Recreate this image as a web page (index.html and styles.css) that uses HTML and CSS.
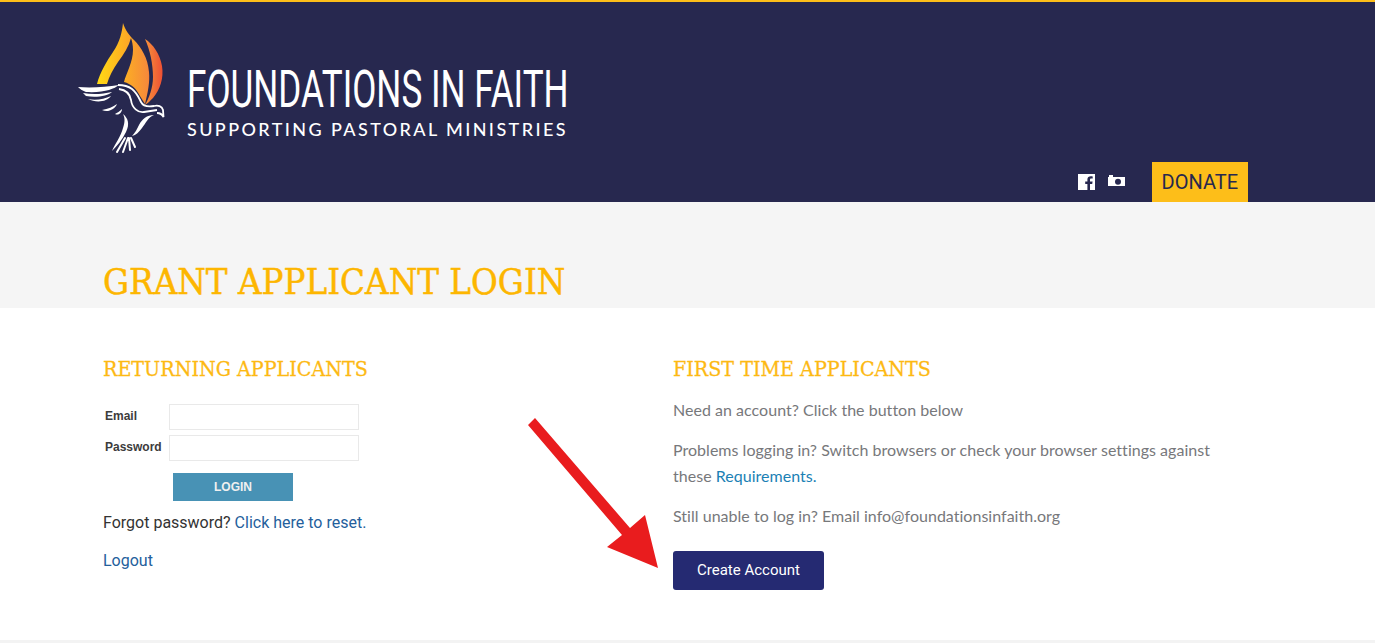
FILE: index.html
```html
<!DOCTYPE html>
<html lang="en">
<head>
    <meta charset="UTF-8">
    <meta name="viewport" content="width=device-width, initial-scale=1.0">
    <title>Foundations in Faith - Grant Applicant Login</title>
    <link rel="stylesheet" href="styles.css">
</head>
<body>
    <header class="site-header">
        <div class="logo">
            <svg class="logo-mark" width="90" height="135" viewBox="0 0 90 135">
                <defs>
                    <linearGradient id="flame" gradientUnits="userSpaceOnUse" x1="18" y1="0" x2="86" y2="0">
                        <stop offset="0" stop-color="#ffdc14"/>
                        <stop offset="0.4" stop-color="#fdb022"/>
                        <stop offset="0.75" stop-color="#f68b3a"/>
                        <stop offset="1" stop-color="#ee4a33"/>
                    </linearGradient>
                </defs>
                <!-- flames -->
                <path fill="url(#flame)" d="M45 1 C47 8 52 14 56 18 C63 25 70 36 71 50 C72 60 70 70 67 82 L62 74 C58 66 53 62 46 60 C48 52 55 40 55 28 C55 23 54 19 53 16 C51 24 46 32 40 40 C35 47 31 55 29 62 L19 62 C22 50 29 39 35 30 C42 20 44 10 45 1 Z"/>
                <path fill="url(#flame)" d="M67 17 C75 22 82 32 84 44 C86 56 82 68 75 76 C72 79 70 81 67 83 C71 76 75 66 75 55 C75 42 72 28 67 17 Z"/>
                <!-- dove: feathers -->
                <path fill="#fff" d="M0 65 C14 66 28 65 41 63 C36 67 26 71 8 70 C5 69 2 67 0 65 Z"/>
                <path fill="#fff" d="M5 71 C15 73 25 72 34 70 C30 74 18 76 8 74 Z"/>
                <path fill="#fff" d="M10 77 C18 79 26 77 33 74 C29 80 18 81 10 77 Z"/>
                <path fill="#fff" d="M24 88 C30 87 35 85 39 82 C37 87 30 91 24 88 Z"/>
                <path fill="#fff" d="M37 92 C39 91 42 89 44 87 C44 90 41 94 37 92 Z"/>
                <!-- dove: head and wing lines -->
                <path fill="none" stroke="#fff" stroke-width="1.8" d="M40 63 C46 63 50 64 54 67 C59 71 61 76 63 80 C65 84 70 85 76 84 C80 83 84 84 85 88 L85.500 95 C84 92 82 91 79 91"/>
                <path fill="none" stroke="#fff" stroke-width="1.8" d="M41 67 C48 68 52 72 53 78 C54 86 60 91 66 90 L79 88"/>
                <!-- dove: body and tail -->
                <path fill="#fff" d="M45 92 C50 96 52 102 48 110 C44 118 39 124 34 129 C37 122 43 114 45 106 C47 100 47 96 45 92 Z"/>
                <path fill="#fff" d="M76 93 C70 95 68 101 64 106 C61 110 58 113 54 114 C57 111 59 107 61 103 C64 97 69 93 76 93 Z"/>
                <path fill="none" stroke="#fff" stroke-width="2" stroke-linecap="round" d="M39 130 L47 116 M45 130 L50 116 M52 128 L51 116 M57 125 L53 116"/>
            </svg>
            <div class="logo-text">
                <div class="logo-name">FOUNDATIONS IN FAITH</div>
                <div class="logo-tag">SUPPORTING PASTORAL MINISTRIES</div>
            </div>
        </div>
        <div class="header-actions">
            <a class="social" href="#" aria-label="Facebook">
                <svg width="17" height="16" viewBox="0 0 17 16">
                    <path fill="#fff" d="M0 0H17V16H12V10H14.200L14.600 7.400H12V5.800C12 5 12.400 4.600 13.200 4.600H14.700V2.400C14.200 2.300 13.500 2.300 12.800 2.300C10.800 2.300 9.400 3.500 9.400 5.500V7.400H7.200V10H9.400V16H0Z"/>
                </svg>
            </a>
            <a class="social social-camera" href="#" aria-label="Instagram">
                <svg width="17" height="12" viewBox="0 0 17 12">
                    <path fill="#fff" fill-rule="evenodd" d="M1 0H5V2H17V11H0V2H1Z M10 3.700A3 3 0 1 0 10 9.700A3 3 0 1 0 10 3.700Z"/>
                </svg>
            </a>
            <a class="donate" href="#">DONATE</a>
        </div>
    </header>

    <section class="page-title">
        <h1>GRANT APPLICANT LOGIN</h1>
    </section>

    <main class="content">
        <section class="col-left">
            <h2>RETURNING APPLICANTS</h2>
            <form class="login-form">
                <div class="form-row">
                    <label for="email">Email</label>
                    <input id="email" type="text">
                </div>
                <div class="form-row">
                    <label for="password">Password</label>
                    <input id="password" type="password">
                </div>
                <button class="login-btn" type="button">LOGIN</button>
            </form>
            <p class="forgot">Forgot password? <a href="#">Click here to reset.</a></p>
            <p class="logout"><a href="#">Logout</a></p>
        </section>
        <section class="col-right">
            <h2>FIRST TIME APPLICANTS</h2>
            <p>Need an account? Click the button below</p>
            <p>Problems logging in? Switch browsers or check your browser settings against these <a href="#">Requirements.</a></p>
            <p>Still unable to log in? Email info@foundationsinfaith.org</p>
            <a class="create-btn" href="#">Create Account</a>
            <svg class="arrow" width="132" height="152" viewBox="0 0 132 152">
                <path fill="#e91c1e" d="M0 7 L7 0 L102 110 L117 97 L130 150 L79 129 L94 117 Z"/>
            </svg>
        </section>
    </main>
</body>
</html>
```

FILE: styles.css
```css
* {
    box-sizing: border-box;
}
body {
    margin: 0;
    height: 643px;
    overflow: hidden;
    font-family: Roboto, Arial, sans-serif;
    background-color: #f3f3f3;
}
a {
    text-decoration: none;
}

.site-header {
    height: 202px;
    background-color: #27284f;
    border-top: 2px solid #fdbe19;
    padding: 20px 127px 0 78px;
    display: flex;
    justify-content: space-between;
}
.logo {
    display: flex;
    align-items: flex-start;
}
.logo-mark {
    flex: none;
}
.logo-text {
    margin: 39px 0 0 19px;
    color: #fff;
    width: 381px;
}
.logo-name {
    font-family: Roboto, sans-serif;
    font-size: 52px;
    line-height: 58px;
    white-space: nowrap;
    transform: scaleX(0.675);
    transform-origin: left;
}
.logo-tag {
    margin-top: -1px;
    font-family: Lato, sans-serif;
    font-size: 18px;
    font-weight: 500;
    line-height: 22px;
    letter-spacing: 2.4px;
    white-space: nowrap;
}

.header-actions {
    align-self: flex-end;
    display: flex;
    align-items: center;
}
.social {
    display: flex;
    margin-right: 13px;
}
.social-camera {
    margin: 0 27px 2px 0;
}
.donate {
    display: block;
    height: 40px;
    padding: 0 10px;
    background-color: #fdbe19;
    color: #27284f;
    font-size: 20px;
    line-height: 41px;
}

.page-title {
    height: 106px;
    background-color: #f5f5f5;
    padding: 57px 103px 0;
}
h1 {
    margin: 0;
    font-family: "DejaVu Serif", serif;
    font-size: 36px;
    font-weight: 400;
    line-height: 46px;
    color: #fdb600;
    white-space: nowrap;
    -webkit-text-stroke: 0.5px #fdb600;
    transform: scaleX(0.907);
    transform-origin: left;
}

.content {
    height: 332px;
    background-color: #fff;
    padding: 48px 103px 0;
    display: flex;
}
.col-left {
    width: 570px;
}
.col-right {
    position: relative;
    width: 545px;
}
h2 {
    margin: 0;
    font-family: "DejaVu Serif", serif;
    font-size: 20.5px;
    font-weight: 400;
    line-height: 26px;
    color: #fdb913;
    white-space: nowrap;
    -webkit-text-stroke: 0.3px #fdb913;
    transform: scaleX(0.933);
    transform-origin: left;
}

.login-form {
    margin-top: 22px;
}
.form-row {
    display: flex;
    align-items: center;
    margin-bottom: 5px;
}
.form-row label {
    width: 66px;
    padding: 0 0 2px 2px;
    font-family: "Liberation Sans", Arial, sans-serif;
    font-size: 12px;
    font-weight: 700;
    color: #3c3c3c;
}
.form-row input {
    width: 190px;
    height: 26px;
    border: 1px solid #e9e9e9;
    background-color: #fff;
}
.login-btn {
    display: block;
    width: 120px;
    height: 28px;
    margin: 12px 0 0 70px;
    border: 0;
    background-color: #4892b5;
    color: #f0f0f0;
    font-family: "Liberation Sans", Arial, sans-serif;
    font-size: 12px;
    font-weight: 700;
}
.forgot {
    margin: 12px 0 0;
    font-size: 16px;
    line-height: 20px;
    color: #333;
}
.logout {
    margin: 18px 0 0;
    font-size: 16px;
    line-height: 20px;
}
.col-left a {
    color: #24609c;
}

.col-right p {
    margin: 0 0 14px;
    font-family: Lato, sans-serif;
    font-size: 16px;
    letter-spacing: 0.025px;
    line-height: 26px;
    color: #77787b;
}
.col-right h2 {
    margin-bottom: 15px;
}
.col-right p a {
    color: #1b81b5;
}
.create-btn {
    display: inline-block;
    width: 151px;
    height: 39px;
    margin-top: 8px;
    border-radius: 3px;
    background-color: #252a72;
    color: #fff;
    font-size: 15px;
    line-height: 38px;
    text-align: center;
}
.arrow {
    position: absolute;
    left: -145px;
    top: 62px;
}
```
